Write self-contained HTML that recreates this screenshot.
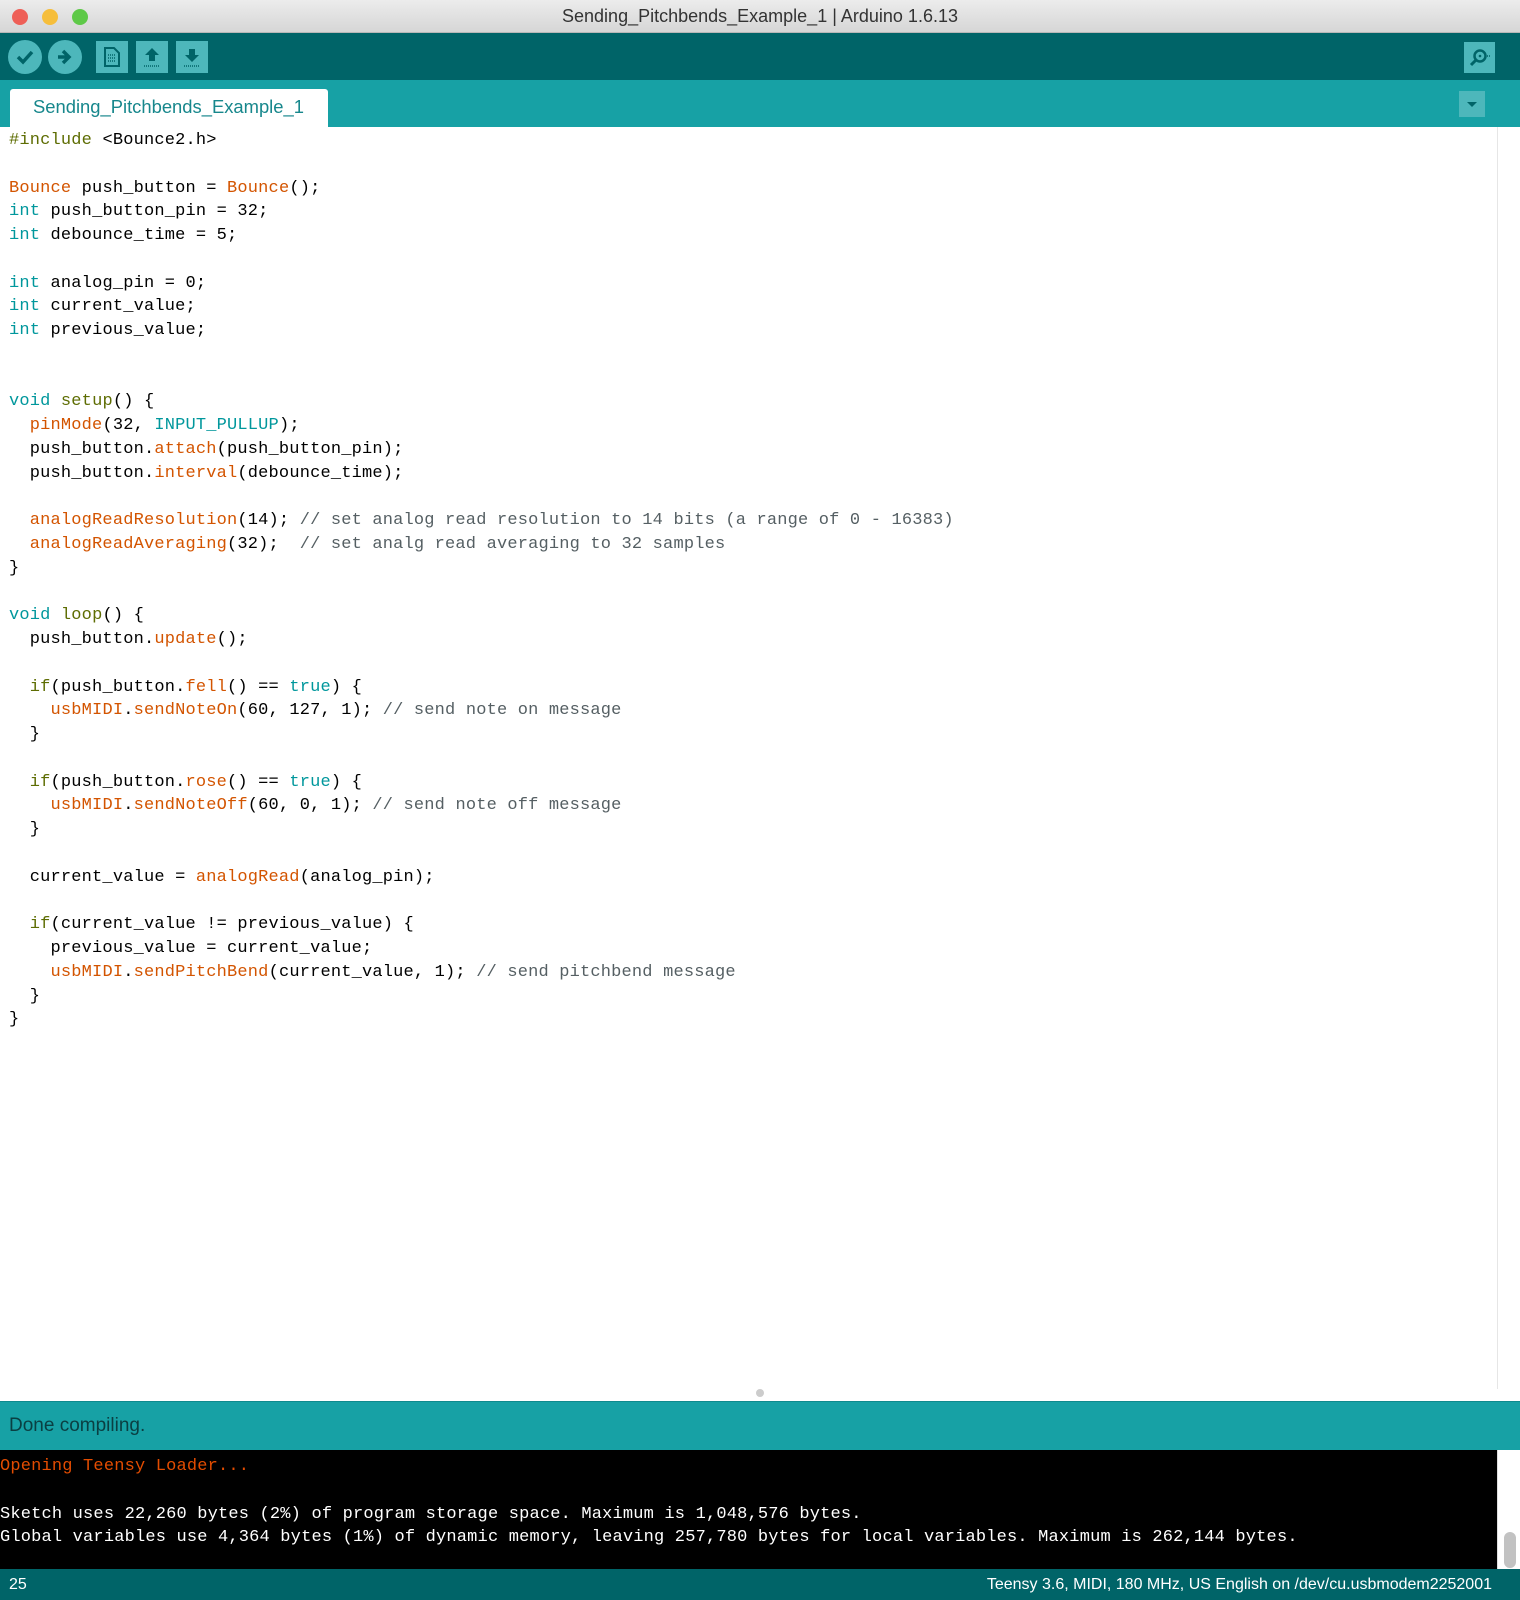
<!DOCTYPE html>
<html><head><meta charset="utf-8">
<style>
*{margin:0;padding:0;box-sizing:border-box}
body{width:1520px;height:1600px;position:relative;overflow:hidden;background:#fff;font-family:"Liberation Sans",sans-serif}
.title{position:absolute;left:0;top:0;width:1520px;height:33px;background:linear-gradient(#ececec,#d6d6d6);border-bottom:1px solid #b8b8b8;text-align:center;font-size:18px;line-height:33px;color:#333}
.dot{position:absolute;top:9px;width:16px;height:16px;border-radius:50%}
.tool{position:absolute;top:33px;left:0;width:1520px;height:47px;background:#006468}
.tabs{position:absolute;top:80px;left:0;width:1520px;height:47px;background:#17a1a5}
.tab{position:absolute;left:10px;top:9px;width:318px;height:38px;background:#fff;border-radius:3px 3px 0 0;color:#17878c;font-size:18.4px;line-height:36px;padding-left:23px}
.btn{position:absolute;background:#4db7bb}
pre{position:absolute;left:9px;top:129px;font-family:"Liberation Mono",monospace;font-size:17px;letter-spacing:0.18px;line-height:23.77px;color:#000}
.k{color:#00979c}.f{color:#d35400}.o{color:#5e6d03}.c{color:#555f63}
.vs{position:absolute;left:1497px;top:127px;width:1px;height:1262px;background:#e6e6e6}
.status{position:absolute;top:1401px;left:0;width:1520px;height:49px;background:#17a1a5;border-top:1px solid #0f8a8e;font-size:19px;line-height:48px;padding-left:9px;color:#0a3f42}
.con{position:absolute;top:1450px;left:0;width:1497px;height:120px;background:#000}
.con pre{left:0;top:5px;color:#fff}
.cs{position:absolute;top:1450px;left:1497px;width:23px;height:120px;background:#fff;border-left:1px solid #ddd}
.bot{position:absolute;top:1569px;left:0;width:1520px;height:31px;background:#006468;color:#fff;font-size:16px;line-height:31px}
</style></head><body>
<div class="title">Sending_Pitchbends_Example_1 | Arduino 1.6.13
<div class="dot" style="left:12px;background:#ee5f57"></div>
<div class="dot" style="left:42px;background:#f6be3b"></div>
<div class="dot" style="left:72px;background:#5ec948"></div></div>
<div class="tool">
<svg style="position:absolute;left:7px;top:6px" width="76" height="36"><circle cx="18" cy="18" r="17" fill="#4db7bb"/><path d="M11 18l5 5 9-10" stroke="#006468" stroke-width="3.5" fill="none"/><circle cx="58" cy="18" r="17" fill="#4db7bb"/><path d="M51 18h10M56 12l6 6-6 6" stroke="#006468" stroke-width="3.5" fill="none"/></svg>
<div class="btn" style="left:96px;top:8px;width:32px;height:32px"><svg width="32" height="32"><path d="M9 7h9l5 5v13H9z" fill="none" stroke="#006468" stroke-width="2"/><path d="M12 14h8M12 17h8M12 20h8" stroke="#006468" stroke-width="1.5" stroke-dasharray="1 1"/></svg></div>
<div class="btn" style="left:136px;top:8px;width:32px;height:32px"><svg width="32" height="32"><path d="M16 7l-7 7h4v6h6v-6h4z" fill="#006468"/><path d="M8 25h16" stroke="#006468" stroke-width="1.5" stroke-dasharray="1 1"/></svg></div>
<div class="btn" style="left:176px;top:8px;width:32px;height:32px"><svg width="32" height="32"><path d="M16 21l-7-7h4V8h6v6h4z" fill="#006468"/><path d="M8 25h16" stroke="#006468" stroke-width="1.5" stroke-dasharray="1 1"/></svg></div>
<div class="btn" style="left:1464px;top:9px;width:31px;height:31px"><svg width="31" height="31"><circle cx="16" cy="14" r="5.5" fill="none" stroke="#006468" stroke-width="2.5"/><path d="M12 18l-5 5" stroke="#006468" stroke-width="3"/><circle cx="16" cy="14" r="1.3" fill="#006468"/><path d="M23 14h4" stroke="#006468" stroke-width="1.5" stroke-dasharray="1 1"/></svg></div>
</div>
<div class="tabs"><div class="tab">Sending_Pitchbends_Example_1</div>
<div class="btn" style="left:1459px;top:11px;width:26px;height:26px"><svg width="26" height="26"><path d="M8 11h10l-5 5z" fill="#006468"/></svg></div></div>
<pre><span class="o">#include</span> &lt;Bounce2.h&gt;

<span class="f">Bounce</span> push_button = <span class="f">Bounce</span>();
<span class="k">int</span> push_button_pin = 32;
<span class="k">int</span> debounce_time = 5;

<span class="k">int</span> analog_pin = 0;
<span class="k">int</span> current_value;
<span class="k">int</span> previous_value;


<span class="k">void</span> <span class="o">setup</span>() {
  <span class="f">pinMode</span>(32, <span class="k">INPUT_PULLUP</span>);
  push_button.<span class="f">attach</span>(push_button_pin);
  push_button.<span class="f">interval</span>(debounce_time);

  <span class="f">analogReadResolution</span>(14); <span class="c">// set analog read resolution to 14 bits (a range of 0 - 16383)</span>
  <span class="f">analogReadAveraging</span>(32);  <span class="c">// set analg read averaging to 32 samples</span>
}

<span class="k">void</span> <span class="o">loop</span>() {
  push_button.<span class="f">update</span>();

  <span class="o">if</span>(push_button.<span class="f">fell</span>() == <span class="k">true</span>) {
    <span class="f">usbMIDI</span>.<span class="f">sendNoteOn</span>(60, 127, 1); <span class="c">// send note on message</span>
  }

  <span class="o">if</span>(push_button.<span class="f">rose</span>() == <span class="k">true</span>) {
    <span class="f">usbMIDI</span>.<span class="f">sendNoteOff</span>(60, 0, 1); <span class="c">// send note off message</span>
  }

  current_value = <span class="f">analogRead</span>(analog_pin);

  <span class="o">if</span>(current_value != previous_value) {
    previous_value = current_value;
    <span class="f">usbMIDI</span>.<span class="f">sendPitchBend</span>(current_value, 1); <span class="c">// send pitchbend message</span>
  }
}</pre>
<div class="vs"></div>
<div style="position:absolute;left:756px;top:1389px;width:8px;height:8px;border-radius:50%;background:#ccc"></div>
<div class="status">Done compiling.</div>
<div class="con"><pre><span style="color:#e34c00">Opening Teensy Loader...</span>

Sketch uses 22,260 bytes (2%) of program storage space. Maximum is 1,048,576 bytes.
Global variables use 4,364 bytes (1%) of dynamic memory, leaving 257,780 bytes for local variables. Maximum is 262,144 bytes.</pre></div>
<div class="cs"><div style="position:absolute;left:6px;top:82px;width:12px;height:36px;border-radius:6px;background:#c2c2c2"></div></div>
<div class="bot"><span style="position:absolute;left:9px">25</span><span style="position:absolute;right:28px">Teensy 3.6, MIDI, 180 MHz, US English on /dev/cu.usbmodem2252001</span></div>
</body></html>
